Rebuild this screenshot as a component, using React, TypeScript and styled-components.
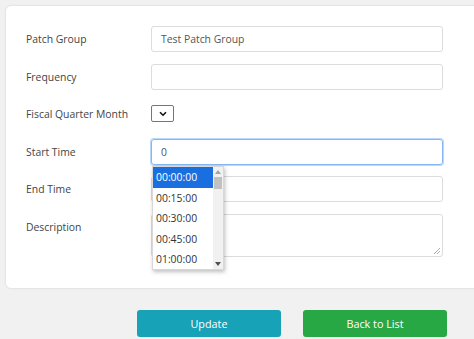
import React from "react";
import styled, { createGlobalStyle } from "styled-components";

const Global = createGlobalStyle`
  html, body { margin: 0; padding: 0; }
  body {
    width: 474px; height: 339px; overflow: hidden;
    background: #f1f1f1;
    font-family: "Open Sans", "Noto Sans", Arial, sans-serif;
  }
`;

const Page = styled.div`
  position: relative;
  width: 474px;
  height: 339px;
  padding: 5px 0 0 5px;
  box-sizing: border-box;
`;

const Card = styled.div`
  position: relative;
  width: 485px;
  height: 284px;
  box-sizing: border-box;
  background: #fff;
  border: 1px solid #e6e6e6;
  border-radius: 6px;
  box-shadow: 0 0 2px rgba(0, 0, 0, 0.05);
  padding: 20px 0 0 20px;
`;

const Form = styled.div`
  display: grid;
  grid-template-columns: 125px 292px;
  row-gap: 11.6px;
`;

const Label = styled.div`
  font-size: 10.4px;
  color: #444;
  line-height: 27px;
  height: 26px;
  white-space: nowrap;
`;

const Input = styled.div<{ $focus?: boolean }>`
  box-sizing: border-box;
  height: 26px;
  border: 1px solid ${(p) => (p.$focus ? "#86b7f5" : "#dcdcdc")};
  box-shadow: ${(p) => (p.$focus ? "0 0 0 1px #b9d6fb" : "none")};
  border-radius: 3px;
  padding: 0 9px;
  font-size: 10.4px;
  line-height: 25px;
  color: #555;
`;

const TextArea = styled.div`
  position: relative;
  box-sizing: border-box;
  height: 43px;
  border: 1px solid #dcdcdc;
  border-radius: 3px;
`;

const Grip = styled.svg`
  position: absolute;
  right: 1px;
  bottom: 1px;
`;

const SelectBox = styled.div`
  margin-top: 4px;
  box-sizing: border-box;
  width: 23px;
  height: 17px;
  border: 1px solid #767676;
  border-radius: 2px;
  display: flex;
  align-items: center;
  justify-content: center;
  background: #fff;
`;

const Dropdown = styled.div`
  position: absolute;
  left: 146px;
  top: 160px;
  width: 72px;
  height: 104px;
  box-sizing: border-box;
  background: #fff;
  border: 1px solid #d8d8d8;
  box-shadow: 1px 2px 4px rgba(0, 0, 0, 0.25);
  display: flex;
  z-index: 5;
`;

const Options = styled.div`
  flex: 1;
  display: flex;
  flex-direction: column;
`;

const Option = styled.div<{ $active?: boolean }>`
  height: 20.5px;
  line-height: 20.5px;
  padding-left: 3px;
  font-size: 10.4px;
  color: ${(p) => (p.$active ? "#fff" : "#333")};
  background: ${(p) => (p.$active ? "#1a6fe0" : "transparent")};
`;

const Scrollbar = styled.div`
  width: 10px;
  background: #f1f1f1;
  display: flex;
  flex-direction: column;
  align-items: center;
  padding: 3px 0;
  box-sizing: border-box;
`;

const Thumb = styled.div`
  margin-top: 3px;
  width: 8px;
  height: 12px;
  background: #c1c1c1;
`;

const Spacer = styled.div`
  flex: 1;
`;

const Buttons = styled.div`
  display: flex;
  gap: 22px;
  padding: 21px 0 0 132px;
`;

const Button = styled.div<{ $color: string }>`
  width: 144px;
  height: 27px;
  border-radius: 3px;
  background: ${(p) => p.$color};
  color: #fff;
  font-size: 10.8px;
  display: flex;
  align-items: center;
  justify-content: center;
`;

const times = ["00:00:00", "00:15:00", "00:30:00", "00:45:00", "01:00:00"];

export default function App() {
  return (
    <Page>
      <Global />
      <Card>
        <Form>
          <Label>Patch Group</Label>
          <Input>Test Patch Group</Input>
          <Label>Frequency</Label>
          <Input />
          <Label>Fiscal Quarter Month</Label>
          <div>
            <SelectBox>
              <svg width="8" height="6" viewBox="0 0 8 6">
                <path d="M1 1.2 L4 4.2 L7 1.2" fill="none" stroke="#111" strokeWidth="1.6" />
              </svg>
            </SelectBox>
          </div>
          <Label>Start Time</Label>
          <Input $focus>0</Input>
          <Label>End Time</Label>
          <Input />
          <Label>Description</Label>
          <TextArea>
            <Grip width="8" height="8" viewBox="0 0 8 8">
              <path d="M7 1 L1 7 M7 4 L4 7" stroke="#999" strokeWidth="0.8" />
            </Grip>
          </TextArea>
        </Form>
        <Dropdown>
          <Options>
            {times.map((t, i) => (
              <Option key={t} $active={i === 0}>
                {t}
              </Option>
            ))}
          </Options>
          <Scrollbar>
            <svg width="6" height="4" viewBox="0 0 6 4">
              <path d="M0 4 L3 0 L6 4 Z" fill="#a3a3a3" />
            </svg>
            <Thumb />
            <Spacer />
            <svg width="6" height="4" viewBox="0 0 6 4">
              <path d="M0 0 L3 4 L6 0 Z" fill="#505050" />
            </svg>
          </Scrollbar>
        </Dropdown>
      </Card>
      <Buttons>
        <Button $color="#17a2b8">Update</Button>
        <Button $color="#28a745">Back to List</Button>
      </Buttons>
    </Page>
  );
}
